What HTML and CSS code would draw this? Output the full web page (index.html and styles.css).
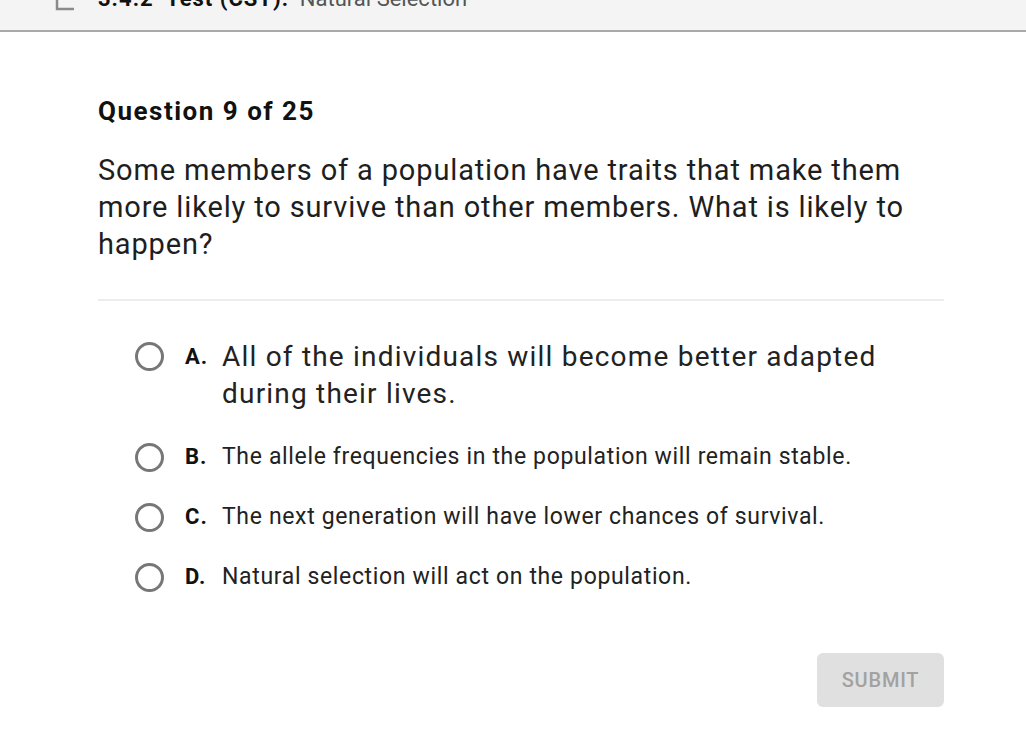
FILE: index.html
```html
<!DOCTYPE html>
<html>
<head>
<meta charset="utf-8">
<link rel="stylesheet" href="styles.css">
</head>
<body>
<header class="topbar">
  <svg class="topicon" width="20" height="14" viewBox="0 0 20 14"><path d="M2 0 V12 H19" fill="none" stroke="#8a8a8a" stroke-width="2.5"/></svg>
  <span class="crumb"><b>3.4.2&nbsp; Test (CST):</b>&nbsp; <span class="crumb-name">Natural Selection</span></span>
</header>
<main class="content">
  <h1 class="qnum">Question 9 of 25</h1>
  <p class="qtext">Some members of a population have traits that make them more likely to survive than other members. What is likely to happen?</p>
  <hr class="divider">
  <ul class="options">
    <li class="option big"><span class="radio"></span><span class="letter">A.</span><span class="otext">All of the individuals will become better adapted during their lives.</span></li>
    <li class="option"><span class="radio"></span><span class="letter">B.</span><span class="otext">The allele frequencies in the population will remain stable.</span></li>
    <li class="option"><span class="radio"></span><span class="letter">C.</span><span class="otext">The next generation will have lower chances of survival.</span></li>
    <li class="option"><span class="radio"></span><span class="letter">D.</span><span class="otext">Natural selection will act on the population.</span></li>
  </ul>
  <div class="actions"><button class="submit">SUBMIT</button></div>
</main>
</body>
</html>
```
FILE: styles.css
```css
* { box-sizing: border-box; }
html, body { margin: 0; padding: 0; background: #fff; }
body { font-family: Roboto, "Liberation Sans", sans-serif; color: #222; width: 1026px; height: 734px; overflow: hidden; }
.topbar {
  height: 32px;
  background: #f4f4f4;
  border-bottom: 2px solid #a9a9a9;
  display: flex;
  align-items: flex-end;
  padding-left: 55px;
  overflow: hidden;
}
.topicon { margin-bottom: 19px; flex: none; }
.crumb {
  margin-left: 23px;
  font-size: 22px;
  line-height: 22px;
  margin-bottom: 20px;
  color: #111;
  white-space: nowrap;
}
.crumb b { font-weight: 700; letter-spacing: 1px; }
.crumb-name { color: #555; font-weight: 400; }
.content { padding: 0 82px 0 98px; }
.qnum { margin: 64px 0 0; font-size: 26px; line-height: 30px; font-weight: 700; letter-spacing: 1.5px; color: #111; }
.qtext { margin: 26px 0 0; font-size: 29px; line-height: 37px; letter-spacing: 0.85px; color: #1e1e1e; }
.divider { margin: 36px 0 0; border: 0; border-top: 2px solid #ececec; height: 0; }
.options { list-style: none; margin: 37px 0 0; padding: 0 0 0 37px; }
.option { display: flex; align-items: flex-start; font-size: 23px; line-height: 30px; letter-spacing: 0.65px; margin-bottom: 30px; }
.option.big { font-size: 28px; line-height: 37px; letter-spacing: 1.2px; margin-bottom: 30px; }
.radio {
  flex: none;
  width: 29px; height: 29px;
  border: 3px solid #777;
  border-radius: 50%;
  margin-top: 1px;
}
.option.big .radio { margin-top: 4px; }
.letter { flex: none; width: 37px; margin-left: 21px; font-weight: 700; font-size: 22px; letter-spacing: 1px; color: #111; }
.otext { color: #222; }
.actions { display: flex; justify-content: flex-end; margin-top: 61px; }
.submit {
  width: 127px; height: 54px;
  border: 0; border-radius: 6px;
  background: #e0e0e0;
  color: #a2a2a2;
  font-family: Roboto, "Liberation Sans", sans-serif;
  font-size: 20px;
  font-weight: 500;
  letter-spacing: 0.8px;
}
```
